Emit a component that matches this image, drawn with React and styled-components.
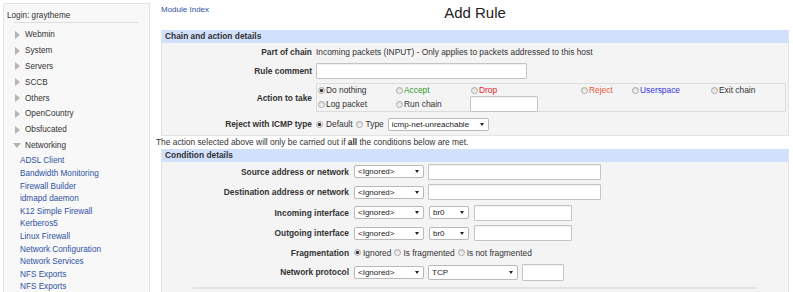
import React from 'react';
import styled, { createGlobalStyle } from 'styled-components';

const Global = createGlobalStyle`
  html, body { margin: 0; padding: 0; background: #fff; }
  body {
    font-family: "Liberation Sans", Arial, sans-serif;
    color: #333;
    overflow: hidden;
  }
`;

const Page = styled.div`
  display: flex;
  align-items: flex-start;
  padding: 3px 4px 0 3px;
  height: 292px;
  box-sizing: border-box;
`;

const Sidebar = styled.nav`
  width: 147px;
  flex: none;
  box-sizing: border-box;
  min-height: 320px;
  border: 1px solid #e4e4e4;
  background: #f8f8f8;
  font-size: 8.2px;
`;

const Login = styled.div`
  padding: 6px 0 0 3px;
  line-height: 11px;
  color: #333;
`;

const Rule = styled.div`
  height: 1px;
  width: 86%;
  margin: 1px auto 0;
  background: #dedede;
`;

const CatList = styled.ul`
  list-style: none;
  margin: 4px 0 0;
  padding: 0;
`;

const Cat = styled.li`
  height: 15.8px;
  display: flex;
  align-items: center;
  padding-left: 8px;
  color: #333;
`;

const Tri = styled.span`
  width: 10px;
  margin-right: 3px;
  display: flex;
  align-items: center;
  justify-content: center;
`;

const SubList = styled.ul`
  list-style: none;
  margin: 2px 0 0;
  padding: 0;
`;

const Sub = styled.li`
  height: 12.6px;
  line-height: 12.6px;
  padding-left: 16px;
  color: #2f52a3;
`;

const Main = styled.main`
  flex: 1;
  margin-left: 11px;
  min-width: 0;
`;

const TitleRow = styled.div`
  display: grid;
  grid-template-columns: 1fr auto 1fr;
  height: 27px;
`;

const ModuleLink = styled.a`
  display: block;
  width: max-content;
  font-size: 8px;
  color: #2f52a3;
  text-decoration: none;
  line-height: 10px;
  padding-top: 2px;
`;

const Title = styled.h1`
  margin: 0;
  font-size: 15px;
  font-weight: normal;
  color: #222;
  line-height: 17px;
  padding-top: 1px;
`;

const Section = styled.section`
  border: 1px solid #e3e3e3;
  border-top: none;
  background: #f4f4f4;
`;

const SectionHead = styled.div`
  height: 13px;
  line-height: 13px;
  background: #d1e0fb;
  font-weight: bold;
  font-size: 8.4px;
  padding-left: 3px;
  color: #333;
`;

const Body = styled.div`
  display: grid;
  grid-template-columns: ${p => p.$label}px 1fr;
  column-gap: ${p => p.$gap}px;
  row-gap: ${p => p.$rowGap}px;
  padding: ${p => p.$pad};
  font-size: 8.4px;
  align-items: center;
`;

const Label = styled.div`
  font-weight: bold;
  text-align: right;
  color: #333;
  min-height: ${p => p.$h || 17}px;
  display: flex;
  align-items: center;
  justify-content: flex-end;
`;

const Value = styled.div`
  display: flex;
  align-items: center;
  gap: ${p => p.$gap || 0}px;
  min-height: ${p => p.$h || 17}px;
`;

const TextInput = styled.div`
  width: ${p => p.$w}px;
  height: ${p => p.$h || 16}px;
  box-sizing: border-box;
  background: #fff;
  border: 1px solid #c4c4c4;
  border-radius: 1px;
  box-shadow: inset 0 1px 1px rgba(0,0,0,0.06);
  flex: none;
`;

const Select = styled.div`
  width: ${p => p.$w}px;
  height: ${p => p.$h || 13}px;
  box-sizing: border-box;
  background: #fff;
  border: 1px solid #b9b9b9;
  border-radius: 2px;
  display: flex;
  align-items: center;
  justify-content: space-between;
  padding: 0 4px 0 3px;
  font-size: 8px;
  color: #222;
  flex: none;
  &::after {
    content: "";
    border-left: 2.5px solid transparent;
    border-right: 2.5px solid transparent;
    border-top: 3.5px solid #222;
  }
`;

const RadioDot = styled.span`
  display: inline-block;
  width: 7px;
  height: 7px;
  box-sizing: border-box;
  border-radius: 50%;
  border: 1px solid #a9a9a9;
  background: ${p => p.$on
    ? 'radial-gradient(circle, #333 0 1.3px, #e6e6e6 1.8px)'
    : 'linear-gradient(#dcdcdc, #f6f6f6)'};
  margin-right: ${p => p.$mr ?? 1}px;
  flex: none;
`;

const Opt = styled.span`
  display: inline-flex;
  align-items: center;
  color: ${p => p.$color || '#333'};
  white-space: nowrap;
  margin-right: ${p => p.$mr || 0}px;
`;

const ActionBox = styled.div`
  width: 470px;
  box-sizing: border-box;
  height: 29px;
  border: 1px solid #dcdcdc;
  padding-left: 1px;
  display: grid;
  grid-template-columns: 78px 75px 110px 51px 79px 1fr;
  grid-template-rows: 12px 16px;
  align-items: center;
`;

const Note = styled.p`
  margin: 0;
  font-size: 8.4px;
  height: 13px;
  line-height: 13px;
  margin-left: -5px;
  color: #333;
`;

const Separator = styled.div`
  grid-column: 1 / -1;
  width: 90%;
  height: 2px;
  margin: 2px auto 0;
  background: #e2e2e2;
`;

const Spacer = styled.div`
  grid-column: 1 / -1;
  height: 20px;
`;

const TriangleRight = () => (
  <svg width="5" height="8" viewBox="0 0 5 8"><path d="M0 0 L5 4 L0 8 Z" fill="#b3b3b3" /></svg>
);
const TriangleDown = () => (
  <svg width="8" height="5" viewBox="0 0 8 5"><path d="M0 0 L8 0 L4 5 Z" fill="#b3b3b3" /></svg>
);

const cats = ['Webmin', 'System', 'Servers', 'SCCB', 'Others', 'OpenCountry', 'Obsfucated'];
const subs = ['ADSL Client', 'Bandwidth Monitoring', 'Firewall Builder', 'idmapd daemon', 'K12 Simple Firewall', 'Kerberos5', 'Linux Firewall', 'Network Configuration', 'Network Services', 'NFS Exports', 'NFS Exports'];

const Radio = ({ on, color, children, mr, dotMr }) => (
  <Opt $color={color} $mr={mr}><RadioDot $on={on} $mr={dotMr} />{children}</Opt>
);

export default function App() {
  return (
    <>
      <Global />
      <Page>
        <Sidebar>
          <Login>Login: graytheme</Login>
          <Rule />
          <CatList>
            {cats.map(c => (
              <Cat key={c}><Tri><TriangleRight /></Tri>{c}</Cat>
            ))}
            <Cat><Tri><TriangleDown /></Tri>Networking</Cat>
          </CatList>
          <SubList>
            {subs.map((s, i) => <Sub key={i}>{s}</Sub>)}
          </SubList>
        </Sidebar>
        <Main>
          <TitleRow>
            <div><ModuleLink href="#">Module Index</ModuleLink></div>
            <Title>Add Rule</Title>
            <div />
          </TitleRow>
          <Section>
            <SectionHead>Chain and action details</SectionHead>
            <Body $label={150} $gap={4} $rowGap={2} $pad="0 0 3px 0">
              <Label $h={17}>Part of chain</Label>
              <Value $h={17}>Incoming packets (INPUT) - Only applies to packets addressed to this host</Value>
              <Label>Rule comment</Label>
              <Value><TextInput $w={211} /></Value>
              <Label $h={33} style={{ alignSelf: 'stretch' }}>Action to take</Label>
              <Value $h={33}>
                <ActionBox>
                  <Radio on>Do nothing</Radio>
                  <Radio color="#2e9a2e">Accept</Radio>
                  <Radio color="#e8262a">Drop</Radio>
                  <Radio color="#f0553a">Reject</Radio>
                  <Radio color="#3535e0">Userspace</Radio>
                  <Radio>Exit chain</Radio>
                  <Radio>Log packet</Radio>
                  <Radio>Run chain</Radio>
                  <TextInput $w={68} style={{ marginLeft: -1 }} />
                </ActionBox>
              </Value>
              <Label $h={16}>Reject with ICMP type</Label>
              <Value $h={16}>
                <Radio on dotMr={3} mr={3}>Default</Radio>
                <Radio dotMr={3} mr={4}>Type</Radio>
                <Select $w={101} $h={13}>icmp-net-unreachable</Select>
              </Value>
            </Body>
          </Section>
          <Note>The action selected above will only be carried out if <b>all</b> the conditions below are met.</Note>
          <Section>
            <SectionHead>Condition details</SectionHead>
            <Body $label={187} $gap={5} $rowGap={3.6} $pad="1px 0 0 0">
              <Label>Source address or network</Label>
              <Value $gap={4}><Select $w={70}>&lt;Ignored&gt;</Select><TextInput $w={173} /></Value>
              <Label>Destination address or network</Label>
              <Value $gap={4}><Select $w={70}>&lt;Ignored&gt;</Select><TextInput $w={173} /></Value>
              <Label>Incoming interface</Label>
              <Value $gap={5}><Select $w={70}>&lt;Ignored&gt;</Select><Select $w={40}>br0</Select><TextInput $w={98} /></Value>
              <Label>Outgoing interface</Label>
              <Value $gap={5}><Select $w={70}>&lt;Ignored&gt;</Select><Select $w={40}>br0</Select><TextInput $w={98} /></Value>
              <Label $h={15}>Fragmentation</Label>
              <Value $h={15}>
                <Radio on dotMr={2} mr={3}>Ignored</Radio>
                <Radio dotMr={2} mr={3}>Is fragmented</Radio>
                <Radio dotMr={2}>Is not fragmented</Radio>
              </Value>
              <Label>Network protocol</Label>
              <Value $gap={4}><Select $w={70}>&lt;Ignored&gt;</Select><Select $w={90} $h={15}>TCP</Select><TextInput $w={42} $h={17} /></Value>
              <Separator />
              <Spacer />
            </Body>
          </Section>
        </Main>
      </Page>
    </>
  );
}
